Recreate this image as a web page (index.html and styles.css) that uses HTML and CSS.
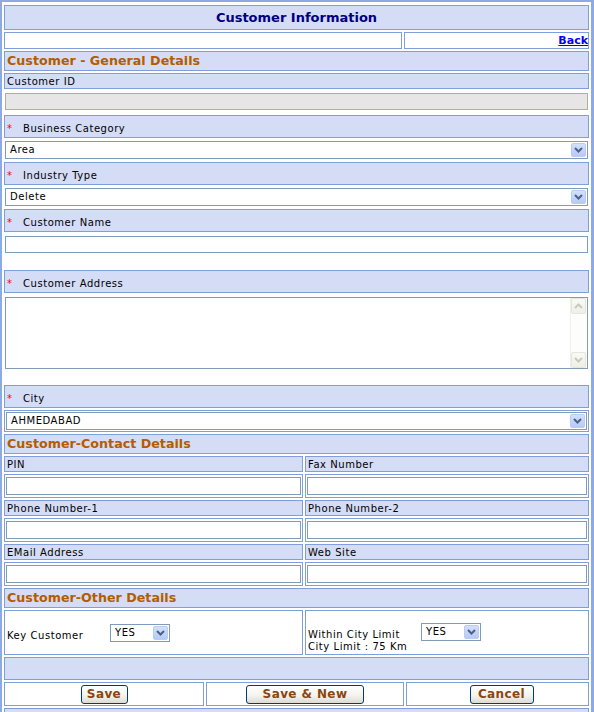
FILE: index.html
```html
<!DOCTYPE html>
<html>
<head>
<meta charset="utf-8">
<title>Customer Information</title>
<link rel="stylesheet" href="styles.css">
</head>
<body>
<div class="frame">
  <div class="page">
    <div class="cell title">Customer Information</div>
    <div class="pair">
      <div class="cell white"></div>
      <div class="cell white back"><a href="#">Back</a></div>
    </div>
    <div class="cell section">Customer - General Details</div>
    <div class="cell label">Customer ID</div>
    <div class="field f-id"><div class="input disabled"></div></div>

    <div class="cell label req"><span class="star">*</span>Business Category</div>
    <div class="field f-sel">
      <div class="select"><span class="val">Area</span><span class="arrow"><svg width="9" height="6" viewBox="0 0 9 6"><path d="M1 1l3.5 3.5L8 1" fill="none" stroke="#4d6185" stroke-width="2"/></svg></span></div>
    </div>

    <div class="cell label req"><span class="star">*</span>Industry Type</div>
    <div class="field f-sel">
      <div class="select"><span class="val">Delete</span><span class="arrow"><svg width="9" height="6" viewBox="0 0 9 6"><path d="M1 1l3.5 3.5L8 1" fill="none" stroke="#4d6185" stroke-width="2"/></svg></span></div>
    </div>

    <div class="cell label req"><span class="star">*</span>Customer Name</div>
    <div class="field f-name"><div class="input"></div></div>

    <div class="cell label req"><span class="star">*</span>Customer Address</div>
    <div class="field f-addr">
      <div class="textbox">
        <div class="ta"></div>
        <div class="scroll">
          <span class="sbtn"><svg width="9" height="6" viewBox="0 0 9 6"><path d="M1 5l3.5-3.5L8 5" fill="none" stroke="#c9c9c0" stroke-width="2"/></svg></span>
          <span class="sbtn"><svg width="9" height="6" viewBox="0 0 9 6"><path d="M1 1l3.5 3.5L8 1" fill="none" stroke="#c9c9c0" stroke-width="2"/></svg></span>
        </div>
      </div>
    </div>

    <div class="cell label req"><span class="star">*</span>City</div>
    <div class="citycell">
      <div class="select"><span class="val">AHMEDABAD</span><span class="arrow"><svg width="9" height="6" viewBox="0 0 9 6"><path d="M1 1l3.5 3.5L8 1" fill="none" stroke="#4d6185" stroke-width="2"/></svg></span></div>
    </div>

    <div class="cell section">Customer-Contact Details</div>
    <div class="grid2">
      <div class="cell label">PIN</div>
      <div class="cell label">Fax Number</div>
      <div class="inputcell"><div class="input"></div></div>
      <div class="inputcell"><div class="input"></div></div>
      <div class="cell label">Phone Number-1</div>
      <div class="cell label">Phone Number-2</div>
      <div class="inputcell"><div class="input"></div></div>
      <div class="inputcell"><div class="input"></div></div>
      <div class="cell label">EMail Address</div>
      <div class="cell label">Web Site</div>
      <div class="inputcell"><div class="input"></div></div>
      <div class="inputcell"><div class="input"></div></div>
    </div>

    <div class="cell section">Customer-Other Details</div>
    <div class="grid2">
      <div class="ocell oleft">
        <span class="olabel">Key Customer</span>
        <div class="select small"><span class="val">YES</span><span class="arrow"><svg width="9" height="6" viewBox="0 0 9 6"><path d="M1 1l3.5 3.5L8 1" fill="none" stroke="#4d6185" stroke-width="2"/></svg></span></div>
      </div>
      <div class="ocell oright">
        <div class="orow">
          <span class="olabel2">Within City Limit</span>
          <div class="select small"><span class="val">YES</span><span class="arrow"><svg width="9" height="6" viewBox="0 0 9 6"><path d="M1 1l3.5 3.5L8 1" fill="none" stroke="#4d6185" stroke-width="2"/></svg></span></div>
        </div>
        <div class="limit">City Limit : 75 Km</div>
      </div>
    </div>

    <div class="cell blankrow"></div>
    <div class="buttons">
      <div class="bcell"><button class="btn b-save">Save</button></div>
      <div class="bcell"><button class="btn b-new">Save &amp; New</button></div>
      <div class="bcell"><button class="btn b-cancel">Cancel</button></div>
    </div>
    <div class="cell blankrow"></div>
  </div>
</div>
</body>
</html>
```
FILE: styles.css
```css
* { box-sizing: border-box; }
html, body { margin: 0; padding: 0; background: #fff; overflow: hidden; }
body {
  font-family: "DejaVu Sans", Verdana, sans-serif;
  font-size: 10px;
  color: #000;
}
.frame {
  width: 594px;
  height: 712px;
  border-top: 2px solid #8eaae4;
  border-left: 2px solid #8eaae4;
  border-right: 3px solid #8eaae4;
  padding: 3px 2px 0;
  overflow: hidden;
}
.page { display: flex; flex-direction: column; gap: 2px; }
.cell { border: 1px solid #7f9fdc; background: #d4dcf6; }
.white { background: #fff; }

.title {
  height: 25px;
  text-align: center;
  font-weight: bold;
  font-size: 13px;
  color: #000080;
  line-height: 23px;
}
.pair { display: grid; grid-template-columns: 398px 1fr; gap: 2px; }
.pair .cell { height: 17px; }
.back { text-align: right; font-weight: bold; font-size: 11px; line-height: 15px; }
.back a { color: #0000ff; text-decoration: underline; }

.section {
  height: 20px;
  font-weight: bold;
  font-size: 12.7px;
  color: #b35c00;
  padding-left: 2px;
  line-height: 18px;
}
.label {
  height: 16px;
  line-height: 15px;
  padding-left: 2px;
  letter-spacing: 0.55px;
  white-space: nowrap;
}
.label.req { height: 23px; padding-top: 4px; line-height: 17px; }
.star { display: inline-block; width: 16px; color: #ff0000; letter-spacing: 0; }

.field { padding: 0 1px; }
.f-id { padding-top: 2px; padding-bottom: 3px; }
.f-sel { padding-top: 1px; padding-bottom: 1px; }
.f-name { padding-top: 2px; padding-bottom: 15px; }
.f-addr { padding-top: 2px; padding-bottom: 14px; }

.input { height: 17px; border: 1px solid #7f9db9; background: #fff; }
.input.disabled { background: #e6e6e6; border-color: #b1ae9e; }

.select {
  height: 18px;
  border: 1px solid #7f9db9;
  background: #fff;
  display: flex;
  align-items: center;
  padding: 1px;
}
.select .val { flex: 1; padding-left: 3px; letter-spacing: 0.55px; line-height: 12px; }
.arrow {
  width: 15px;
  height: 14px;
  border-radius: 2px;
  border: 1px solid #b8ccf6;
  background: linear-gradient(#d3e0fd, #b6caf6);
  display: flex;
  align-items: center;
  justify-content: center;
}
.arrow svg, .sbtn svg { display: block; }

.textbox {
  height: 72px;
  border: 1px solid #7f9db9;
  background: #fff;
  display: flex;
}
.ta { flex: 1; }
.scroll {
  width: 17px;
  display: flex;
  flex-direction: column;
  justify-content: space-between;
  background: #fdfdfb;
  border-left: 1px solid #f0f0ea;
  padding: 0 1px 0 0;
}
.sbtn {
  height: 16px;
  border: 1px solid #e6e5dc;
  border-radius: 2px;
  background: linear-gradient(#f9f9f6, #efefe8);
  display: flex;
  align-items: center;
  justify-content: center;
}

.citycell { border: 1px solid #7f9fdc; background: #fff; padding: 1px; }

.grid2 { display: grid; grid-template-columns: 299px 1fr; gap: 2px; }
.inputcell { height: 24px; border: 1px solid #7f9fdc; background: #fff; padding: 2px 1px; }
.inputcell .input { height: 18px; }

.ocell { height: 45px; border: 1px solid #7f9fdc; background: #fff; }
.oleft { display: flex; align-items: center; padding: 13px 2px 12px; align-items: flex-start; }
.olabel { width: 103px; padding-top: 6px; letter-spacing: 0.55px; line-height: 12px; }
.select.small { width: 60px; }
.oright { padding: 12px 2px 0; }
.orow { display: flex; align-items: flex-start; }
.olabel2 { width: 113px; padding-top: 6px; letter-spacing: 0.55px; line-height: 12px; }
.limit { letter-spacing: 0.55px; line-height: 12px; }

.blankrow { height: 23px; }
.buttons { display: grid; grid-template-columns: 200px 198px 1fr; gap: 2px; }
.bcell {
  height: 24px;
  border: 1px solid #7f9fdc;
  background: #fff;
  display: flex;
  align-items: center;
  justify-content: center;
}
.btn {
  height: 19px;
  border: 1px solid #003c74;
  border-radius: 3px;
  background: linear-gradient(#ffffff, #f4f3ee 55%, #dedbd0);
  font-family: "DejaVu Sans", Verdana, sans-serif;
  font-weight: bold;
  font-size: 12px;
  color: #8a4510;
  padding: 0;
  line-height: 17px;
  letter-spacing: 0.4px;
}
.b-save { width: 47px; }
.b-new { width: 118px; }
.b-cancel { width: 64px; margin-left: 8px; }
```
